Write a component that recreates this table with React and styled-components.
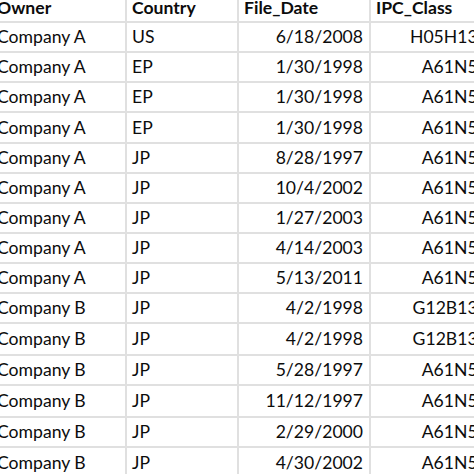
import React from "react";
import styled, { createGlobalStyle } from "styled-components";

const Global = createGlobalStyle`
  html, body { margin: 0; padding: 0; background: #ffffff; overflow: hidden; }
  body { font-family: Lato, "Open Sans", sans-serif; color: #0c0c0c; }
`;

const Sheet = styled.div`
  display: grid;
  grid-template-columns: 135px 112px 132px 143px;
  margin-left: -8px;
  width: max-content;
`;

const Cell = styled.div`
  box-sizing: border-box;
  height: ${(p) => p.$h}px;
  border-right: 2px solid #e0e0e0;
  border-bottom: 2px solid #e0e0e0;
  display: flex;
  align-items: ${(p) => (p.$head ? "flex-start" : "center")};
  justify-content: ${(p) => (p.$right ? "flex-end" : "flex-start")};
  padding: 0 6px 0 5px;
  font-size: 17.6px;
  font-weight: ${(p) => (p.$head ? 700 : 400)};
  line-height: ${(p) => (p.$head ? "16px" : "1")};
  white-space: nowrap;
  overflow: hidden;
`;

const heads = ["Owner", "Country", "File_Date", "IPC_Class"];

const rows = [
  ["Company A", "US", "6/18/2008", "H05H13/00", 30],
  ["Company A", "EP", "1/30/1998", "A61N5/10", 30],
  ["Company A", "EP", "1/30/1998", "A61N5/10", 30],
  ["Company A", "EP", "1/30/1998", "A61N5/10", 31],
  ["Company A", "JP", "8/28/1997", "A61N5/10", 30],
  ["Company A", "JP", "10/4/2002", "A61N5/10", 30],
  ["Company A", "JP", "1/27/2003", "A61N5/10", 30],
  ["Company A", "JP", "4/14/2003", "A61N5/10", 30],
  ["Company A", "JP", "5/13/2011", "A61N5/10", 30],
  ["Company B", "JP", "4/2/1998", "G12B13/00", 30],
  ["Company B", "JP", "4/2/1998", "G12B13/00", 32],
  ["Company B", "JP", "5/28/1997", "A61N5/10", 30],
  ["Company B", "JP", "11/12/1997", "A61N5/10", 32],
  ["Company B", "JP", "2/29/2000", "A61N5/10", 30],
  ["Company B", "JP", "4/30/2002", "A61N5/10", 31],
];

export default function App() {
  return (
    <>
      <Global />
      <Sheet>
        {heads.map((h) => (
          <Cell key={h} $head $h={23}>
            {h}
          </Cell>
        ))}
        {rows.map((r, i) => (
          <React.Fragment key={i}>
            <Cell $h={r[4]}>{r[0]}</Cell>
            <Cell $h={r[4]}>{r[1]}</Cell>
            <Cell $h={r[4]} $right>
              {r[2]}
            </Cell>
            <Cell $h={r[4]} $right>
              {r[3]}
            </Cell>
          </React.Fragment>
        ))}
      </Sheet>
    </>
  );
}
